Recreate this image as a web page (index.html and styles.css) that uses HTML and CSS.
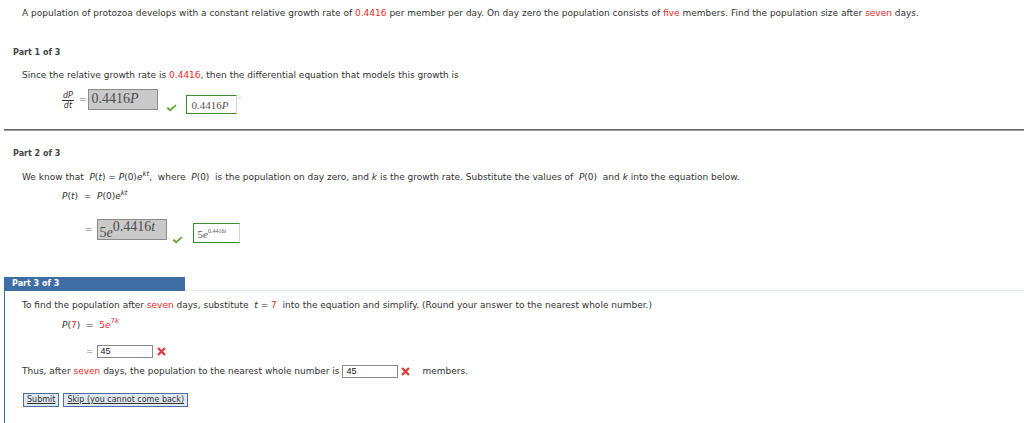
FILE: index.html
```html
<!DOCTYPE html>
<html>
<head>
<meta charset="utf-8">
<link rel="stylesheet" href="styles.css">
</head>
<body>
<div class="problem">A population of protozoa develops with a constant relative growth rate of <span class="red">0.4416</span> per member per day. On day zero the population consists of <span class="red">five</span> members. Find the population size after <span class="red">seven</span> days.</div>

<div class="part part1">
  <div class="part-title">Part 1 of 3</div>
  <div class="line l1">Since the relative growth rate is <span class="red">0.4416</span>, then the differential equation that models this growth is</div>
  <div class="eqrow eq1">
    <span class="frac"><span class="num">dP</span><span class="den">dt</span></span>
    <span class="eqsign">=</span>
    <span class="graybox g1">0.4416<i>P</i></span>
    <svg class="check c1" width="11" height="8" viewBox="0 0 11 8"><path d="M0.5 4.2 L2.2 3 L4.2 5 L9.4 0.4 L10.6 1.4 L4.2 7.6 Z" fill="#5fa436"/></svg>
    <span class="ansbox a1">0.4416<i>P</i></span>
    <span class="dot">·</span>
  </div>
</div>

<div class="sep"></div>

<div class="part part2">
  <div class="part-title">Part 2 of 3</div>
  <div class="line l2">We know that &nbsp;<i>P</i>(<i>t</i>) = <i>P</i>(0)<i>e</i><sup><i>kt</i></sup>, &nbsp;where &nbsp;<i>P</i>(0) &nbsp;is the population on day zero, and <i>k</i> is the growth rate. Substitute the values of &nbsp;<i>P</i>(0) &nbsp;and <i>k</i> into the equation below.</div>
  <div class="line l3"><i>P</i>(<i>t</i>) &nbsp;= &nbsp;<i>P</i>(0)<i>e</i><sup><i>kt</i></sup></div>
  <div class="eqrow eq2">
    <span class="eqsign">=</span>
    <span class="graybox g2">5<i>e</i><sup>0.4416<i>t</i></sup></span>
    <svg class="check c2" width="11" height="8" viewBox="0 0 11 8"><path d="M0.5 4.2 L2.2 3 L4.2 5 L9.4 0.4 L10.6 1.4 L4.2 7.6 Z" fill="#5fa436"/></svg>
    <span class="ansbox a2">5<i>e</i><sup>0.4416<i>t</i></sup></span>
  </div>
</div>

<div class="part3">
  <div class="p3head"><div class="p3title">Part 3 of 3</div></div>
  <div class="p3body">
    <div class="line l4">To find the population after <span class="red">seven</span> days, substitute &nbsp;<i>t</i> = <span class="red">7</span> &nbsp;into the equation and simplify. (Round your answer to the nearest whole number.)</div>
    <div class="line l5"><i>P</i>(<span class="red">7</span>) &nbsp;= &nbsp;<span class="red">5<i>e</i><sup>7<i>k</i></sup></span></div>
    <div class="eqrow eq3">
      <span class="eqsign small">=</span>
      <span class="input i1">45</span>
      <svg class="xmark" width="9" height="9" viewBox="0 0 9 9"><path d="M1 1 L8 8 M8 1 L1 8" stroke="#d9413c" stroke-width="2.4"/></svg>
    </div>
    <div class="line l6">Thus, after <span class="red">seven</span> days, the population to the nearest whole number is <span class="input i2">45</span><svg class="xmark x2" width="9" height="9" viewBox="0 0 9 9"><path d="M1 1 L8 8 M8 1 L1 8" stroke="#d9413c" stroke-width="2.4"/></svg><span class="members">members.</span></div>
    <div class="buttons">
      <span class="btn">Submit</span>
      <span class="btn">Skip (you cannot come back)</span>
    </div>
  </div>
</div>
</body>
</html>
```
FILE: styles.css
```css
html, body {
  margin: 0;
  padding: 0;
  background: #fff;
}
body {
  font-family: "DejaVu Sans", Verdana, sans-serif;
  font-size: 9px;
  color: #333;
  width: 1024px;
  height: 423px;
  overflow: hidden;
}
.red { color: #e8291f; }
i { font-style: italic; }
sup {
  font-size: 7px;
  vertical-align: 4px;
  line-height: 0;
}
.problem {
  padding: 7px 0 0 22px;
  line-height: 12px;
  white-space: nowrap;
}
.part-title {
  font-weight: bold;
  font-size: 8px;
  color: #444;
  padding-left: 13px;
  line-height: 10px;
}
.line {
  padding-left: 22px;
  line-height: 12px;
  white-space: nowrap;
}
.part1 { padding-top: 29px; }
.l1 { margin-top: 11px; }
.eqrow {
  display: flex;
  align-items: flex-start;
}
.eq1 { margin-top: 8px; height: 40px; padding-left: 62px; }
.frac {
  display: flex;
  flex-direction: column;
  align-items: center;
  font-style: italic;
  font-size: 8px;
  line-height: 9px;
  margin-top: 2px;
}
.frac .num { border-bottom: 1px solid #333; padding: 0 1px; }
.eqsign {
  margin: 5px 2px 0 5px;
  color: #666;
}
.graybox {
  background: #c9c9c9;
  border: 1px solid #8a8a8a;
  font-family: "Liberation Serif", "Times New Roman", serif;
  color: #4d4d4d;
  box-sizing: border-box;
  padding-left: 2px;
}
.g1 {
  width: 70px;
  height: 21px;
  font-size: 14px;
  line-height: 17px;
}
.check { margin-top: 15px; }
.c1 { margin-left: 8px; }
.ansbox {
  border: 1px solid #3d8a2e;
  border-right-color: #c9dfc3;
  background: #fff;
  font-family: "Liberation Serif", "Times New Roman", serif;
  color: #555;
  box-sizing: border-box;
}
.a1 {
  margin: 6px 0 0 9px;
  width: 51px;
  height: 19px;
  font-size: 11px;
  line-height: 18px;
  padding-left: 4px;
}
.dot { margin: 8px 0 0 1px; color: #777; font-size: 8px; line-height: 4px; }
.sep {
  margin: 0 0 0 4px;
  border-top: 1px solid #666;
  height: 1px;
  background: #999;
}
.part2 { padding-top: 18px; }
.l2 { margin-top: 12px; }
.l3 { margin-top: 7px; padding-left: 62px; }
.eq2 { margin-top: 17px; height: 58px; padding-left: 82px; }
.eq2 .eqsign { margin: 5px 4px 0 3px; }
.g2 {
  width: 70px;
  height: 21px;
  font-size: 14px;
  line-height: 25px;
  padding-left: 2px;
}
.g2 sup { font-size: 14px; vertical-align: 6px; }
.c2 { margin-left: 5px; margin-top: 17px; }
.a2 {
  margin: 4px 0 0 10px;
  width: 47px;
  height: 20px;
  font-size: 11px;
  line-height: 21px;
  padding-left: 4px;
}
.a2 sup { font-size: 6px; vertical-align: 5px; }
.part3 {
  border-left: 1px solid #3a6aa3;
  margin-left: 4px;
  height: 160px;
}
.p3head {
  border-bottom: 1.5px solid #e2ebf4;
  height: 13px;
  display: flex;
}
.p3title {
  background: #3f6ea6;
  color: #fff;
  font-weight: bold;
  font-size: 8px;
  width: 173px;
  padding-left: 8px;
  line-height: 14px;
  height: 14px;
  margin-left: -1px;
}
.p3body .line { padding-left: 17px; }
.l4 { margin-top: 8px; }
.l5 { margin-top: 8px; padding-left: 57px !important; }
.l5 .red sup { vertical-align: 5px; }
.eq3 { margin-top: 13px; padding-left: 81px; height: 14px; align-items: center; }
.eqsign.small { margin: 0 3px 0 0; color: #888; }
.input {
  display: inline-block;
  border: 1px solid #888;
  box-sizing: border-box;
  width: 56px;
  height: 13px;
  line-height: 11px;
  padding-left: 3px;
  font-family: "Liberation Sans", Arial, sans-serif;
  font-size: 9px;
  color: #111;
  vertical-align: middle;
  background: #fff;
}
.xmark { margin-left: 4px; }
.l6 { margin-top: 6px; line-height: 14px; }
.l6 .xmark { vertical-align: middle; margin-left: 3px; }
.members { margin-left: 12px; }
.buttons {
  margin-top: 15px;
  padding-left: 18px;
  display: flex;
  gap: 4px;
}
.btn {
  background: #dfe7f1;
  border: 1px solid #4d6f9c;
  color: #333;
  font-size: 8px;
  text-decoration: underline;
  padding: 0 3px;
  line-height: 12px;
  height: 12px;
}
```
